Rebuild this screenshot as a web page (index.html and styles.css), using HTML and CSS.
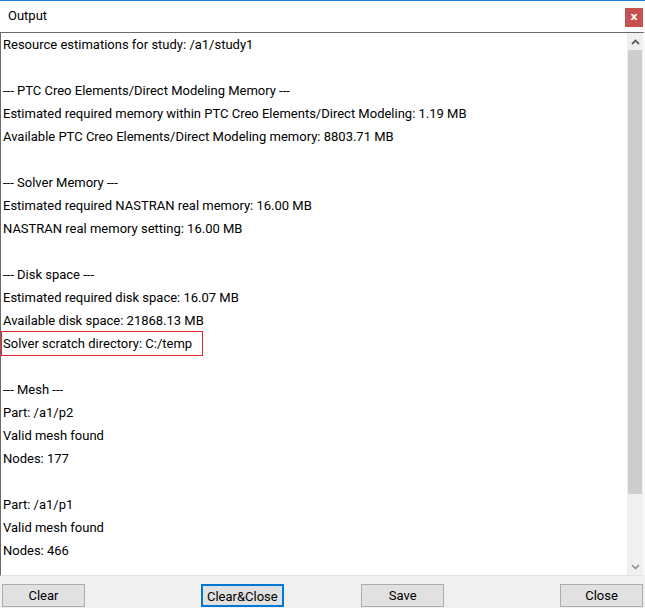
FILE: index.html
```html
<!DOCTYPE html>
<html>
<head>
<meta charset="utf-8">
<link rel="stylesheet" href="styles.css">
</head>
<body>
<div class="window">
  <div class="titlebar">
    <span class="title">Output</span>
    <span class="close-x">x</span>
  </div>
  <div class="textarea">
    <div class="text">
      <div class="line">Resource estimations for study: /a1/study1</div>
      <div class="line"></div>
      <div class="line">--- PTC Creo Elements/Direct Modeling Memory ---</div>
      <div class="line">Estimated required memory within PTC Creo Elements/Direct Modeling: 1.19 MB</div>
      <div class="line">Available PTC Creo Elements/Direct Modeling memory: 8803.71 MB</div>
      <div class="line"></div>
      <div class="line">--- Solver Memory ---</div>
      <div class="line">Estimated required NASTRAN real memory: 16.00 MB</div>
      <div class="line">NASTRAN real memory setting: 16.00 MB</div>
      <div class="line"></div>
      <div class="line">--- Disk space ---</div>
      <div class="line">Estimated required disk space: 16.07 MB</div>
      <div class="line">Available disk space: 21868.13 MB</div>
      <div class="line marked">Solver scratch directory: C:/temp</div>
      <div class="line"></div>
      <div class="line">--- Mesh ---</div>
      <div class="line">Part: /a1/p2</div>
      <div class="line">Valid mesh found</div>
      <div class="line">Nodes: 177</div>
      <div class="line"></div>
      <div class="line">Part: /a1/p1</div>
      <div class="line">Valid mesh found</div>
      <div class="line">Nodes: 466</div>
    </div>
    <div class="scrollbar">
      <div class="sb-btn">
        <svg width="9" height="6" viewBox="0 0 9 6"><path d="M1 5 L4.5 1.5 L8 5" fill="none" stroke="#606060" stroke-width="1.8"/></svg>
      </div>
      <div class="sb-thumb"></div>
      <div class="sb-track"></div>
      <div class="sb-btn">
        <svg width="9" height="6" viewBox="0 0 9 6"><path d="M1 1 L4.5 4.5 L8 1" fill="none" stroke="#909090" stroke-width="1.6"/></svg>
      </div>
    </div>
  </div>
  <div class="buttons">
    <button class="btn first">Clear</button>
    <button class="btn mid default">Clear&amp;Close</button>
    <button class="btn mid">Save</button>
    <button class="btn last">Close</button>
  </div>
</div>
</body>
</html>
```
FILE: styles.css
```css
html, body {
  margin: 0;
  padding: 0;
}
body {
  width: 645px;
  height: 608px;
  overflow: hidden;
  background: #f0f0f0;
  font-family: Roboto, "Noto Sans", sans-serif;
  font-size: 13px;
  color: #000;
}
.window {
  display: flex;
  flex-direction: column;
  height: 608px;
  border-top: 1px solid #1a7fd4;
  box-sizing: border-box;
}
.titlebar {
  height: 31px;
  background: #fff;
  display: flex;
  justify-content: space-between;
  align-items: flex-start;
  padding: 0 2px 0 8px;
  box-sizing: border-box;
}
.title {
  margin-top: 6px;
  font-size: 13px;
  line-height: 17px;
}
.close-x {
  margin-top: 7px;
  width: 18px;
  height: 19px;
  background: #c75050;
  color: #fff;
  font-weight: bold;
  font-size: 11px;
  line-height: 17px;
  text-align: center;
  font-family: "DejaVu Sans", sans-serif;
}
.textarea {
  height: 544px;
  display: flex;
  background: #fff;
  border-top: 1px solid #6a6a6a;
  border-left: 1px solid #6a6a6a;
  border-bottom: 1px solid #e3e3e3;
  border-right: 2px solid #fafafa;
  box-sizing: border-box;
}
.text {
  flex: 1;
  padding-left: 2px;
  overflow: hidden;
  white-space: nowrap;
}
.line {
  height: 23px;
  line-height: 23px;
}
.marked {
  width: fit-content;
  margin-left: -1px;
  padding-left: 1px;
  padding-right: 10px;
  box-shadow: 0 0 0 1px #e3262b;
}
.scrollbar {
  width: 16px;
  background: #f0f0f0;
  display: flex;
  flex-direction: column;
}
.sb-btn {
  height: 17px;
  display: flex;
  align-items: center;
  justify-content: center;
}
.sb-thumb {
  height: 444px;
  margin: 0 1px 0 1px;
  background: #cdcdcd;
}
.sb-track {
  flex: 1;
}
.buttons {
  flex: 1;
  display: grid;
  grid-template-columns: repeat(4, 1fr);
  align-items: start;
  padding: 8px 2px 0 2px;
}
.btn {
  width: 83px;
  height: 23px;
  background: #e1e1e1;
  border: 1px solid #adadad;
  font-family: Roboto, "Noto Sans", sans-serif;
  font-size: 13px;
  color: #000;
  padding: 1px 0 0 0;
  margin: 0;
  line-height: 20px;
}
.first { justify-self: start; }
.mid { justify-self: center; }
.last { justify-self: end; }
.default {
  border: 2px solid #0078d7;
}
```
